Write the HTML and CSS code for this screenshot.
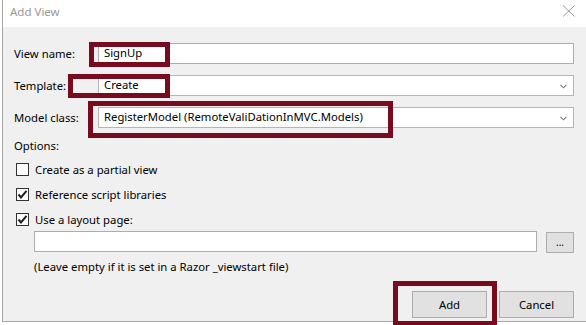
FILE: index.html
```html
<!DOCTYPE html>
<html>
<head>
<meta charset="utf-8">
<link rel="stylesheet" href="styles.css">
</head>
<body>
<div class="page">
  <div class="window">
    <div class="titlebar">
      <span class="title">Add View</span>
      <svg class="close" width="14" height="12" viewBox="0 0 14 12"><path d="M1 0.5 L12.5 11.5 M12.5 0.5 L1 11.5" stroke="#9a9a9a" stroke-width="1" fill="none"/></svg>
    </div>
    <div class="content">
      <div class="form">
        <label class="lbl">View name:</label>
        <div class="field">SignUp</div>
        <label class="lbl">Template:</label>
        <div class="field select">Create<svg class="chev" width="7" height="5" viewBox="0 0 7 5"><path d="M0.5 0.8 L3.5 3.8 L6.5 0.8" stroke="#7a7a7a" stroke-width="1.1" fill="none"/></svg></div>
        <label class="lbl">Model class:</label>
        <div class="field select">RegisterModel (RemoteValiDationInMVC.Models)<svg class="chev" width="7" height="5" viewBox="0 0 7 5"><path d="M0.5 0.8 L3.5 3.8 L6.5 0.8" stroke="#7a7a7a" stroke-width="1.1" fill="none"/></svg></div>
      </div>
      <div class="options-title">Options:</div>
      <div class="opt"><span class="check"></span><span>Create as a partial view</span></div>
      <div class="opt"><span class="check"><svg width="11" height="11" viewBox="0 0 11 11"><path d="M1.5 5.5 L4 8.5 L9.5 1.8" stroke="#1e1e1e" stroke-width="2" fill="none"/></svg></span><span>Reference script libraries</span></div>
      <div class="opt"><span class="check"><svg width="11" height="11" viewBox="0 0 11 11"><path d="M1.5 5.5 L4 8.5 L9.5 1.8" stroke="#1e1e1e" stroke-width="2" fill="none"/></svg></span><span>Use a layout page:</span></div>
      <div class="layout-row">
        <div class="field layout-field"></div>
        <div class="btn browse">...</div>
      </div>
      <div class="hint">(Leave empty if it is set in a Razor _viewstart file)</div>
      <div class="buttons">
        <div class="btn main">Add</div>
        <div class="btn main cancel">Cancel</div>
      </div>
    </div>
  </div>
  <div class="mark mark-name"></div>
  <div class="mark mark-template"></div>
  <div class="mark mark-model"></div>
  <div class="mark mark-add"></div>
</div>
</body>
</html>
```

FILE: styles.css
```css
html, body {
  margin: 0;
  padding: 0;
  background: #ffffff;
}
body {
  font-family: "Noto Sans", "Open Sans", "DejaVu Sans", sans-serif;
  font-size: 11.3px;
  color: #000;
  overflow: hidden;
}
.page {
  position: relative;
  width: 586px;
  height: 325px;
  overflow: hidden;
}
.window {
  margin-left: 2px;
  width: 600px;
  height: 321px;
  border-left: 1px solid #a6a6a6;
  border-bottom: 1px solid #a6a6a6;
  background: #f0f0f0;
  display: flex;
  flex-direction: column;
}
.titlebar {
  height: 27px;
  background: #ffffff;
  display: flex;
  align-items: center;
  padding-left: 7px;
  position: relative;
}
.title {
  color: #999999;
  font-size: 11.5px;
  line-height: 16px;
  margin-top: -3px;
}
.close {
  position: absolute;
  left: 559px;
  top: 5px;
}
.content {
  padding: 16px 0 0 11px;
  width: 561px;
  display: flex;
  flex-direction: column;
}
.form {
  display: grid;
  grid-template-columns: 84px 476px;
  row-gap: 11px;
  align-items: center;
}
.lbl {
  line-height: 16px;
  white-space: nowrap;
}
.field {
  box-sizing: border-box;
  height: 21px;
  background: #fff;
  border: 1px solid #adadad;
  padding-left: 5px;
  line-height: 18px;
  position: relative;
  white-space: nowrap;
}
.select {
  border-color: #b5b5b5;
}
.chev {
  position: absolute;
  right: 6px;
  top: 8px;
}
.options-title {
  margin-top: 10px;
  line-height: 16px;
}
.opt {
  display: flex;
  align-items: center;
  height: 16px;
  margin-top: 9px;
}
.options-title + .opt {
  margin-top: 7px;
}
.check {
  box-sizing: border-box;
  width: 13px;
  height: 13px;
  border: 1px solid #333333;
  background: #fff;
  margin-left: 2px;
  margin-right: 6px;
  display: flex;
  align-items: center;
  justify-content: center;
}
.check svg {
  display: block;
}
.layout-row {
  display: flex;
  align-items: flex-start;
  margin-top: 4px;
  margin-left: 20px;
}
.layout-field {
  width: 503px;
}
.btn {
  box-sizing: border-box;
  background: #e1e1e1;
  border: 1px solid #adadad;
  display: flex;
  align-items: center;
  justify-content: center;
}
.browse {
  width: 28px;
  height: 21px;
  margin-left: 9px;
  margin-top: 1px;
  font-size: 10px;
  line-height: 10px;
  padding-bottom: 2px;
}
.hint {
  margin-top: 6px;
  margin-left: 20px;
  line-height: 16px;
}
.buttons {
  display: flex;
  justify-content: flex-end;
  gap: 12px;
  margin-top: 16px;
  width: 560px;
}
.main {
  width: 75px;
  height: 27px;
}
.cancel {
  width: 75px;
}
.mark {
  position: absolute;
  box-sizing: border-box;
  border: 5px solid #7a0b1f;
}
.mark-name {
  left: 89px;
  top: 42px;
  width: 81px;
  height: 25px;
}
.mark-template {
  left: 68px;
  top: 74px;
  width: 102px;
  height: 24px;
}
.mark-model {
  left: 88px;
  top: 101px;
  width: 305px;
  height: 37px;
}
.mark-add {
  left: 393px;
  top: 281px;
  width: 104px;
  height: 45px;
}
```
